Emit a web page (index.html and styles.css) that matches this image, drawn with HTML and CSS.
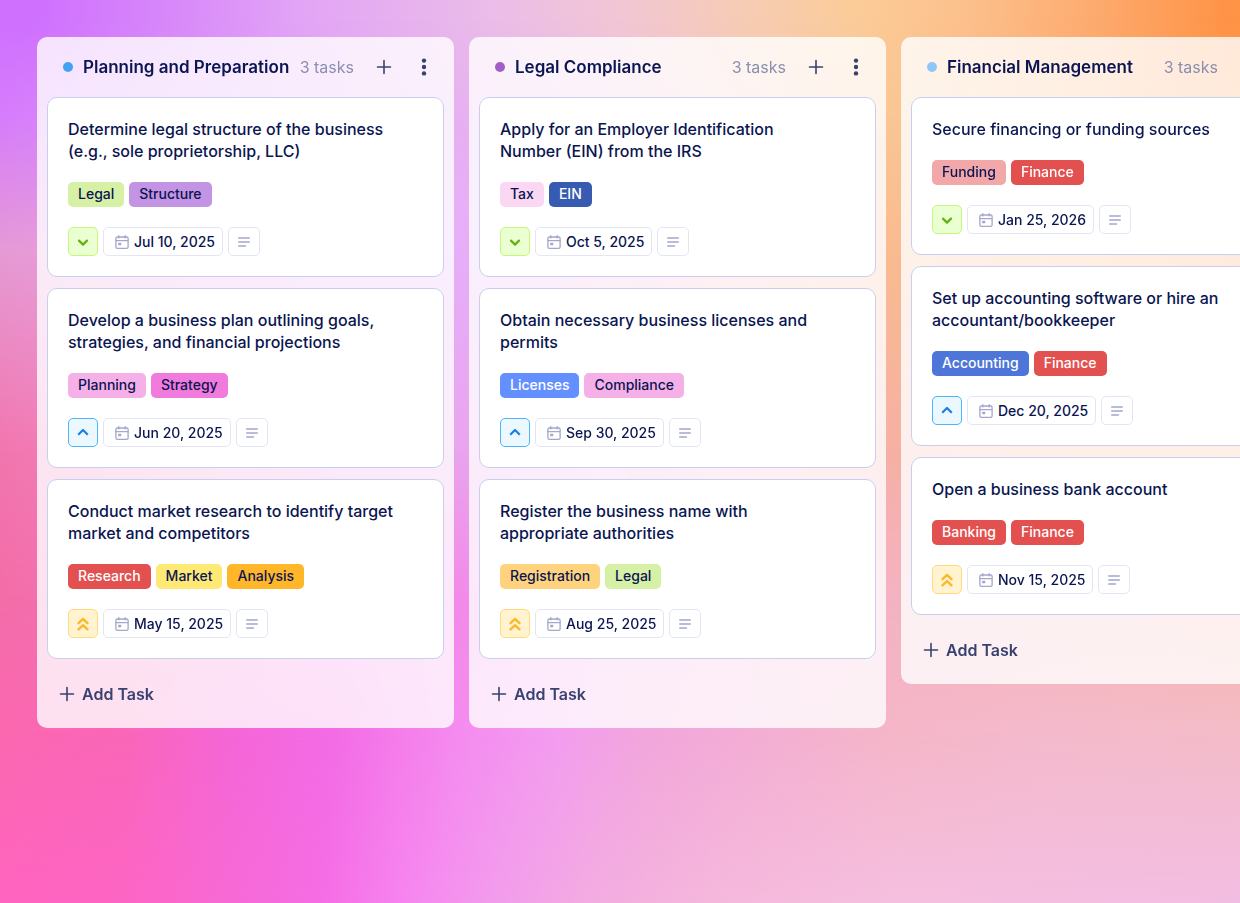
FILE: index.html
```
<!DOCTYPE html>
<html lang="en">
<head>
<meta charset="utf-8">
<title>Board</title>
<link rel="stylesheet" href="styles.css">
</head>
<body>

<!-- icons -->
<svg class="sprite" aria-hidden="true">
  <symbol id="plus" viewBox="0 0 16 16"><path d="M8 1.500v13M1.500 8h13" fill="none" stroke="currentColor" stroke-width="1.600" stroke-linecap="round"/></symbol>
  <symbol id="more" viewBox="0 0 6 18"><g fill="currentColor"><circle cx="3" cy="2.600" r="2.200"/><circle cx="3" cy="9" r="2.200"/><circle cx="3" cy="15.400" r="2.200"/></g></symbol>
  <symbol id="low" viewBox="0 0 16 16"><path d="M4 6.600l4 4 4-4" fill="none" stroke="currentColor" stroke-width="2.200" stroke-linecap="round" stroke-linejoin="round"/></symbol>
  <symbol id="high" viewBox="0 0 16 16"><path d="M4 9l4-4 4 4" fill="none" stroke="currentColor" stroke-width="2.200" stroke-linecap="square" stroke-linejoin="round"/></symbol>
  <symbol id="urgent" viewBox="0 0 16 16"><path d="M3.500 7.200L8 2.900l4.500 4.300M3.500 13.400L8 9.100l4.500 4.300" fill="none" stroke="currentColor" stroke-width="2.300" stroke-linecap="round" stroke-linejoin="round"/></symbol>
  <symbol id="date" viewBox="0 0 14 14"><g fill="none" stroke="currentColor" stroke-width="1.300" stroke-linecap="round"><rect x=".9" y="2" width="12.200" height="11.300" rx="1.400"/><path d="M1 5.600h12M3.800.700v2.200M10.200.700v2.200"/></g><rect x="3.200" y="7.800" width="3" height="2.400" rx=".5" fill="currentColor"/></symbol>
  <symbol id="text" viewBox="0 0 12 10"><path d="M.7 1h10.600M.7 5h10.600M.7 9h6.800" fill="none" stroke="currentColor" stroke-width="1.400" stroke-linecap="round"/></symbol>
</svg>

<!-- each band fades into the next one down the page -->
<div class="backdrop" aria-hidden="true">
  <div class="band band-1"></div>
  <div class="band band-2"></div>
  <div class="band band-3"></div>
  <div class="band band-4"></div>
  <div class="band band-5"></div>
  <div class="band band-6"></div>
  <div class="band band-7"></div>
</div>

<main class="board">

  <section class="column">
    <header class="column-head">
      <span class="dot dot-blue"></span>
      <h2>Planning and Preparation</h2>
      <span class="count">3 tasks</span>
      <button class="icon-btn" aria-label="Add task"><svg class="i-plus"><use href="#plus"/></svg></button>
      <button class="icon-btn" aria-label="More"><svg class="i-more"><use href="#more"/></svg></button>
    </header>

    <article class="card">
      <h3>Determine legal structure of the business (e.g., sole proprietorship, LLC)</h3>
      <div class="tags"><span class="tag lime">Legal</span><span class="tag violet">Structure</span></div>
      <div class="meta">
        <button class="priority low" aria-label="Low priority"><svg><use href="#low"/></svg></button>
        <button class="date"><svg><use href="#date"/></svg>Jul 10, 2025</button>
        <button class="note" aria-label="Description"><svg><use href="#text"/></svg></button>
      </div>
    </article>

    <article class="card">
      <h3>Develop a business plan outlining goals, strategies, and financial projections</h3>
      <div class="tags"><span class="tag pink">Planning</span><span class="tag magenta">Strategy</span></div>
      <div class="meta">
        <button class="priority high" aria-label="High priority"><svg><use href="#high"/></svg></button>
        <button class="date"><svg><use href="#date"/></svg>Jun 20, 2025</button>
        <button class="note" aria-label="Description"><svg><use href="#text"/></svg></button>
      </div>
    </article>

    <article class="card">
      <h3>Conduct market research to identify target market and competitors</h3>
      <div class="tags"><span class="tag red">Research</span><span class="tag yellow">Market</span><span class="tag orange">Analysis</span></div>
      <div class="meta">
        <button class="priority urgent" aria-label="Urgent priority"><svg><use href="#urgent"/></svg></button>
        <button class="date"><svg><use href="#date"/></svg>May 15, 2025</button>
        <button class="note" aria-label="Description"><svg><use href="#text"/></svg></button>
      </div>
    </article>

    <button class="add-task"><svg class="i-plus"><use href="#plus"/></svg>Add Task</button>
  </section>

  <section class="column">
    <header class="column-head">
      <span class="dot dot-purple"></span>
      <h2>Legal Compliance</h2>
      <span class="count">3 tasks</span>
      <button class="icon-btn" aria-label="Add task"><svg class="i-plus"><use href="#plus"/></svg></button>
      <button class="icon-btn" aria-label="More"><svg class="i-more"><use href="#more"/></svg></button>
    </header>

    <article class="card">
      <h3>Apply for an Employer Identification Number (EIN) from the IRS</h3>
      <div class="tags"><span class="tag blush">Tax</span><span class="tag navy">EIN</span></div>
      <div class="meta">
        <button class="priority low" aria-label="Low priority"><svg><use href="#low"/></svg></button>
        <button class="date"><svg><use href="#date"/></svg>Oct 5, 2025</button>
        <button class="note" aria-label="Description"><svg><use href="#text"/></svg></button>
      </div>
    </article>

    <article class="card">
      <h3>Obtain necessary business licenses and permits</h3>
      <div class="tags"><span class="tag azure">Licenses</span><span class="tag pink">Compliance</span></div>
      <div class="meta">
        <button class="priority high" aria-label="High priority"><svg><use href="#high"/></svg></button>
        <button class="date"><svg><use href="#date"/></svg>Sep 30, 2025</button>
        <button class="note" aria-label="Description"><svg><use href="#text"/></svg></button>
      </div>
    </article>

    <article class="card">
      <h3>Register the business name with appropriate authorities</h3>
      <div class="tags"><span class="tag peach">Registration</span><span class="tag lime">Legal</span></div>
      <div class="meta">
        <button class="priority urgent" aria-label="Urgent priority"><svg><use href="#urgent"/></svg></button>
        <button class="date"><svg><use href="#date"/></svg>Aug 25, 2025</button>
        <button class="note" aria-label="Description"><svg><use href="#text"/></svg></button>
      </div>
    </article>

    <button class="add-task"><svg class="i-plus"><use href="#plus"/></svg>Add Task</button>
  </section>

  <section class="column">
    <header class="column-head">
      <span class="dot dot-sky"></span>
      <h2>Financial Management</h2>
      <span class="count">3 tasks</span>
      <button class="icon-btn" aria-label="Add task"><svg class="i-plus"><use href="#plus"/></svg></button>
      <button class="icon-btn" aria-label="More"><svg class="i-more"><use href="#more"/></svg></button>
    </header>

    <article class="card">
      <h3>Secure financing or funding sources</h3>
      <div class="tags"><span class="tag salmon">Funding</span><span class="tag red">Finance</span></div>
      <div class="meta">
        <button class="priority low" aria-label="Low priority"><svg><use href="#low"/></svg></button>
        <button class="date"><svg><use href="#date"/></svg>Jan 25, 2026</button>
        <button class="note" aria-label="Description"><svg><use href="#text"/></svg></button>
      </div>
    </article>

    <article class="card">
      <h3>Set up accounting software or hire an accountant/bookkeeper</h3>
      <div class="tags"><span class="tag blue">Accounting</span><span class="tag red">Finance</span></div>
      <div class="meta">
        <button class="priority high" aria-label="High priority"><svg><use href="#high"/></svg></button>
        <button class="date"><svg><use href="#date"/></svg>Dec 20, 2025</button>
        <button class="note" aria-label="Description"><svg><use href="#text"/></svg></button>
      </div>
    </article>

    <article class="card">
      <h3>Open a business bank account</h3>
      <div class="tags"><span class="tag red">Banking</span><span class="tag red">Finance</span></div>
      <div class="meta">
        <button class="priority urgent" aria-label="Urgent priority"><svg><use href="#urgent"/></svg></button>
        <button class="date"><svg><use href="#date"/></svg>Nov 15, 2025</button>
        <button class="note" aria-label="Description"><svg><use href="#text"/></svg></button>
      </div>
    </article>

    <button class="add-task"><svg class="i-plus"><use href="#plus"/></svg>Add Task</button>
  </section>

</main>
</body>
</html>
```
FILE: styles.css
```
* {
  box-sizing: border-box;
}

body {
  margin: 0;
  font-family: Inter, "Liberation Sans", sans-serif;
  font-size: 16px;
  color: #0a1551;
}

h2,
h3 {
  margin: 0;
}

button {
  margin: 0;
  padding: 0;
  border: 0;
  background: none;
  color: inherit;
  font: inherit;
  cursor: pointer;
}

.sprite {
  display: none;
}

/* backdrop */
.backdrop {
  position: fixed;
  inset: 0;
  z-index: -1;
}

.band {
  position: absolute;
  inset: 0;
}

.band-1 {
  background: linear-gradient(90deg, #cf70ff 3%, #d98bf9 15%, #e2a4f6 24%, #ebbde8 40%, #f2c6d4 50%, #f6ccb4 60%, #fbcc98 69%, #fcc08c 78%, #fdab70 88%, #ff9346 99%);
}

.band-2 {
  background: linear-gradient(90deg, #d67cfc 0%, #dc98f8 18%, #e7b0f2 37%, #efbfe2 50%, #f6c8c0 60%, #fac694 72%, #fdae74 87%, #ff954a 100%);
  mask-image: linear-gradient(transparent 2%, #000 13%);
}

.band-3 {
  background: linear-gradient(90deg, #e69ad4 0%, #e6a0e0 10%, #e2a4f4 22%, #e6aefa 37%, #f0b4e0 50%, #f7bcb0 63%, #f9bb90 72%, #ff9c58 100%);
  mask-image: linear-gradient(transparent 13%, #000 28%);
}

.band-4 {
  background: linear-gradient(90deg, #f275ae 0%, #f088c4 12%, #eb96e0 25%, #e9a4ee 37%, #eeaee4 50%, #f4b0c0 63%, #f5b0a4 72%, #f9b48c 85%, #fbb47c 100%);
  mask-image: linear-gradient(transparent 28%, #000 50%);
}

.band-5 {
  background: linear-gradient(90deg, #f36da8 0%, #f274bc 12%, #f07cde 25%, #f28ae8 37%, #f2a0e6 50%, #f3acce 63%, #f4b2c2 72%, #f3b4a4 100%);
  mask-image: linear-gradient(transparent 50%, #000 66%);
}

.band-6 {
  background: linear-gradient(90deg, #fb68b0 0%, #fa66b8 10%, #f566d8 19%, #f36ce6 27%, #f57cea 32%, #f58bf0 37%, #f39df0 45%, #f2a6dc 52%, #f4aed4 61%, #f5b6c8 72%, #f4bacc 85%, #f4bcc8 100%);
  mask-image: linear-gradient(transparent 66%, #000 81%);
}

.band-7 {
  background: linear-gradient(90deg, #ff64bf 0%, #fd65c4 10%, #f66ad6 19%, #f56de4 26%, #f686f0 33%, #f29cec 40%, #f3ace0 48%, #f5b8dc 58%, #f5bfdf 72%, #f2bde2 100%);
  mask-image: linear-gradient(transparent 81%, #000 100%);
}

/* board */
.board {
  display: flex;
  align-items: flex-start;
  gap: 15px;
  min-height: 100vh;
  padding: 37px;
  overflow: hidden;
}

.column {
  flex: 0 0 417px;
  display: flex;
  flex-direction: column;
  gap: 11px;
  padding: 10px;
  border-radius: 10px;
  background: rgba(255, 255, 255, 0.8);
}

.column-head {
  display: flex;
  align-items: center;
  height: 39px;
  padding: 0 8px 0 16px;
}

.column-head h2 {
  margin-left: 10px;
  font-size: 17px;
  font-weight: 600;
}

.dot {
  width: 10px;
  height: 10px;
  border-radius: 50%;
}

.dot-blue { background: #41a4f0; }
.dot-purple { background: #a45fc4; }
.dot-sky { background: #8fc6f8; }

.count {
  margin-left: auto;
  margin-right: 18px;
  color: #8a8fb0;
}

.icon-btn {
  display: flex;
  align-items: center;
  justify-content: center;
  width: 24px;
  height: 24px;
  color: #39426f;
}

.icon-btn + .icon-btn {
  margin-left: 16px;
}

.i-plus {
  width: 16px;
  height: 16px;
}

.i-more {
  width: 6px;
  height: 18px;
}

.card {
  padding: 20px;
  border: 1px solid #c8ceed;
  border-radius: 10px;
  background: #fff;
}

.card h3 {
  padding-right: 20px;
  font-size: 16px;
  font-weight: 500;
  line-height: 22px;
}

.tags,
.meta {
  display: flex;
  gap: 5px;
  margin-top: 20px;
}

.tag {
  padding: 0 10px 1px;
  border-radius: 5px;
  font-size: 14px;
  font-weight: 500;
  line-height: 24px;
}

.lime { background: #d6f0a6; }
.violet { background: #c393e4; }
.pink { background: #f5b0e8; }
.magenta { background: #f17bdc; }
.blush { background: #fad7f3; }
.salmon { background: #f2a8a8; }
.yellow { background: #ffe975; }
.orange { background: #ffb629; }
.peach { background: #ffd37d; }
.red { background: #e35050; color: #fff; }
.navy { background: #375bb0; color: #fff; }
.azure { background: #6490ff; color: #fff; }
.blue { background: #4d76d8; color: #fff; }

.meta button {
  display: flex;
  align-items: center;
  justify-content: center;
  height: 29px;
  border: 1px solid #e3e5f5;
  border-radius: 5px;
}

.meta .priority {
  width: 30px;
}

.priority svg {
  width: 16px;
  height: 16px;
}

.meta .low {
  border-color: #c6f77e;
  background: #eaffd2;
  color: #64b20e;
}

.meta .high {
  border-color: #4bb6f9;
  background: #ebf8ff;
  color: #1a7de4;
}

.meta .urgent {
  border-color: #ffdb80;
  background: #fff3d0;
  color: #ffb629;
}

.meta .date {
  gap: 5px;
  padding: 0 7px 0 11px;
  font-size: 14px;
  font-weight: 500;
}

.date svg {
  width: 14px;
  height: 14px;
  color: #a3a7cc;
}

.meta .note {
  width: 32px;
  color: #a3a7cc;
}

.note svg {
  width: 12px;
  height: 10px;
}

.add-task {
  display: flex;
  align-items: center;
  gap: 7px;
  height: 48px;
  padding-left: 12px;
  color: #39426f;
  font-weight: 600;
}
```
